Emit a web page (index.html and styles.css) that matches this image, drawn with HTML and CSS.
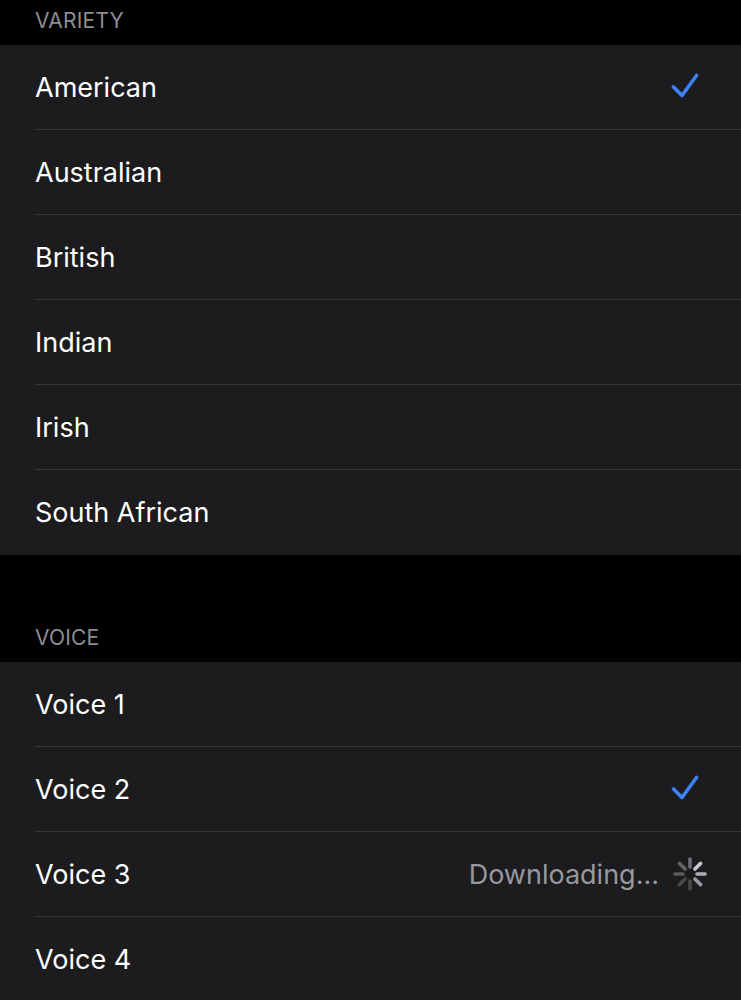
FILE: index.html
```html
<!DOCTYPE html>
<html lang="en">
<head>
    <meta charset="UTF-8">
    <meta name="viewport" content="width=device-width, initial-scale=1.0">
    <title>Voice Settings</title>
    <link rel="stylesheet" href="styles.css">
</head>
<body>

<div class="section-header first">VARIETY</div>
<div class="group">
    <div class="row">
        <span class="label">American</span>
        <svg class="check" viewBox="0 0 28 26" width="28" height="26"><path d="M2.5 14 L11 22.5 L25.5 2.5" fill="none" stroke="#3d83f7" stroke-width="3.6" stroke-linecap="round" stroke-linejoin="round"/></svg>
    </div>
    <div class="row"><span class="label">Australian</span></div>
    <div class="row"><span class="label">British</span></div>
    <div class="row"><span class="label">Indian</span></div>
    <div class="row"><span class="label">Irish</span></div>
    <div class="row"><span class="label">South African</span></div>
</div>

<div class="section-header">VOICE</div>
<div class="group">
    <div class="row"><span class="label">Voice 1</span></div>
    <div class="row">
        <span class="label">Voice 2</span>
        <svg class="check" viewBox="0 0 28 26" width="28" height="26"><path d="M2.5 14 L11 22.5 L25.5 2.5" fill="none" stroke="#3d83f7" stroke-width="3.6" stroke-linecap="round" stroke-linejoin="round"/></svg>
    </div>
    <div class="row">
        <span class="label">Voice 3</span>
        <span class="status">Downloading...</span>
        <svg class="spinner" viewBox="-17 -17 34 34" width="34" height="34">
            <g stroke-width="3.6" stroke-linecap="round">
                <line x1="0" y1="-7" x2="0" y2="-15" stroke="#6e6e73" transform="rotate(0)"/>
                <line x1="0" y1="-7" x2="0" y2="-15" stroke="#c7c7cc" transform="rotate(45)"/>
                <line x1="0" y1="-7" x2="0" y2="-15" stroke="#aeaeb2" transform="rotate(90)"/>
                <line x1="0" y1="-7" x2="0" y2="-15" stroke="#98989d" transform="rotate(135)"/>
                <line x1="0" y1="-7" x2="0" y2="-15" stroke="#48484a" transform="rotate(180)"/>
                <line x1="0" y1="-7" x2="0" y2="-15" stroke="#48484a" transform="rotate(225)"/>
                <line x1="0" y1="-7" x2="0" y2="-15" stroke="#5a5a5e" transform="rotate(270)"/>
                <line x1="0" y1="-7" x2="0" y2="-15" stroke="#636366" transform="rotate(315)"/>
            </g>
        </svg>
    </div>
    <div class="row"><span class="label">Voice 4</span></div>
</div>

</body>
</html>
```

FILE: styles.css
```css
body {
    margin: 0;
    background-color: #000;
    color: #fff;
    font-family: Inter, "Noto Sans", sans-serif;
    overflow: hidden;
}
.section-header {
    height: 36px;
    padding: 71px 0 0 35px;
    font-size: 21px;
    color: #8d8d93;
    letter-spacing: 0.2px;
    line-height: 24px;
}
.section-header.first {
    height: 36px;
    padding-top: 9px;
}
.group {
    background-color: #1c1c1e; /* grouped cell background */
    padding-left: 35px;
}
.row {
    display: flex;
    align-items: center;
    height: 84px;
    padding-right: 35px;
    border-bottom: 1px solid #38383a;
}
.row:last-child {
    height: 85px;
    border-bottom: none;
}
.label {
    flex: 1;
    font-size: 27px;
}
.check {
    margin-right: 7px;
    margin-top: -2px;
}
.status {
    font-size: 27px;
    color: #98989f;
    margin-right: 14px;
}
.spinner {
    margin-right: -1px;
}
```
